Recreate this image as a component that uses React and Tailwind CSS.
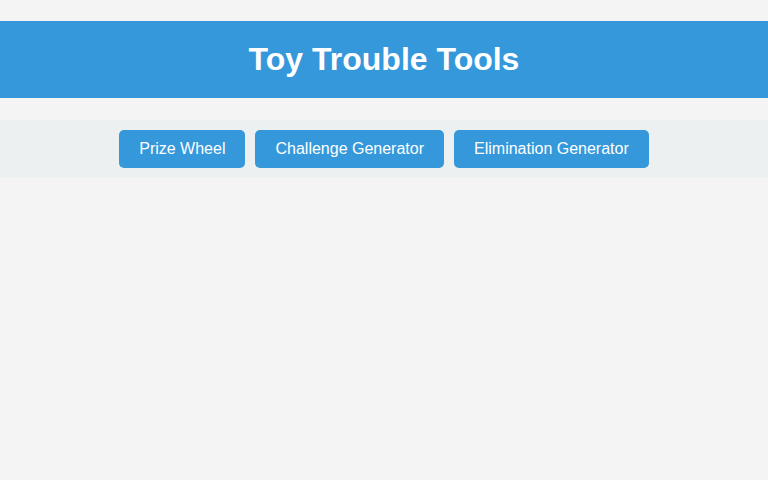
const tools = ['Prize Wheel', 'Challenge Generator', 'Elimination Generator'];

export default function App() {
  return (
    <div className="min-h-screen bg-[#f4f4f4] pt-[21px] font-['Liberation_Sans',Arial,sans-serif]">
      <header className="bg-[#3498db] py-5 text-center text-white">
        <h1 className="text-[32px] font-bold leading-[1.15]">Toy Trouble Tools</h1>
      </header>

      {/* Tool switcher */}
      <nav className="mt-[22px] flex justify-center gap-[10px] bg-[#ecf0f1] py-[10px]">
        {tools.map((name) => (
          <button
            key={name}
            className="rounded-[5px] bg-[#3498db] px-5 py-[10px] text-base leading-[1.15] text-white"
          >
            {name}
          </button>
        ))}
      </nav>
    </div>
  );
}
